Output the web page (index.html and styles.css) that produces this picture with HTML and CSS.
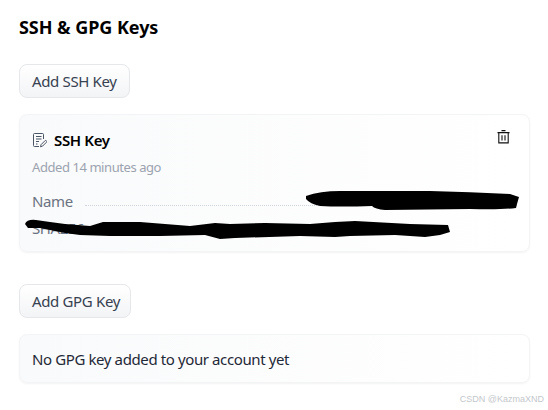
FILE: index.html
```html
<!DOCTYPE html>
<html lang="en">
<head>
<meta charset="utf-8">
<title>SSH &amp; GPG Keys</title>
<link rel="stylesheet" href="styles.css">
</head>
<body>
<main class="page">
  <h1 class="title">SSH &amp; GPG Keys</h1>
  <button class="btn btn-ssh" type="button">Add SSH Key</button>
  <section class="card key-card">
    <div class="key-head">
      <svg class="key-icon" viewBox="0 0 14 15" width="14" height="15" fill="none" stroke="#4b5563" stroke-width="1">
        <path d="M10.5 6V1.5a1 1 0 0 0-1-1h-8a1 1 0 0 0-1 1v11a1 1 0 0 0 1 1H6"/>
        <path d="M3 3.5h5.5M3 6h5.5M3 8.5h3M3 11h1.5"/>
        <path d="M7.5 13.8l.6-2.2 3.8-3.8a1 1 0 0 1 1.5 1.5l-3.8 3.8z"/>
      </svg>
      <h2 class="key-name">SSH Key</h2>
      <svg class="trash" viewBox="0 0 13 14" width="13" height="14" fill="none" stroke="#111" stroke-width="1.1">
        <path d="M4.5.6h4M.5 2.6h12M1.8 2.6v10.3h9.4V2.6M5 5.2v5.2M8 5.2v5.2"/>
      </svg>
    </div>
    <p class="added">Added 14 minutes ago</p>
    <div class="row row-name"><span class="label">Name</span><span class="dots"></span></div>
    <div class="row row-sha"><span class="label">SHA256:</span></div>
    <svg class="scribble" viewBox="0 0 548 410" width="548" height="410" aria-hidden="true">
      <path fill="#000" d="M306 196 Q320 191 340 191 L430 191 Q470 192 510 194 L519 197 L517 204 L516 208 Q500 210 470 209 L385 210 Q375 209 372 206 Q340 207 320 206 Q310 204 306 199Z"/>
      <path fill="#000" d="M25 224 Q27 219 36 220 L50 222 L65 224 L90 226 L103 222 L140 222 L165 224 L190 226 L215 223 L230 224 L265 223 L310 224 L335 222 L355 221 L410 224 L448 225 L450 232 L440 235 L425 237 L410 236 L395 235 L350 236 L335 237 L300 236 L235 238 L220 239 L205 235 L160 236 L110 236 L80 235 L65 233 L40 228 L28 228Z"/>
    </svg>
  </section>
  <button class="btn btn-gpg" type="button">Add GPG Key</button>
  <section class="card empty-card">No GPG key added to your account yet</section>
</main>
<div class="watermark">CSDN @KazmaXND</div>
</body>
</html>
```

FILE: styles.css
```css
* { box-sizing: border-box; }
html, body { margin: 0; height: 100%; background: #fff; }
body {
  width: 548px;
  height: 410px;
  overflow: hidden;
  position: relative;
  font-family: "Noto Sans", "Open Sans", sans-serif;
  color: #1f2937;
}
.page { padding: 15px 18px 0 19px; display: flex; flex-direction: column; align-items: flex-start; }
.title { margin: 0; font-size: 18px; line-height: 24px; font-weight: 700; color: #000; letter-spacing: -0.05px; }
.btn {
  font: inherit;
  font-size: 15px;
  letter-spacing: -0.35px;
  line-height: 20px;
  color: #374151;
  height: 34px;
  padding: 0 12px;
  border: 1px solid #e5e7eb;
  border-radius: 8px;
  background: linear-gradient(to bottom, #fff, #f3f4f6);
  text-align: left;
  white-space: nowrap;
}
.btn-ssh { margin-top: 25px; width: 111px; }
.btn-gpg { margin-top: 32px; width: 112px; }
.card {
  width: 511px;
  margin-top: 16px;
  border: 1px solid #f3f4f6;
  border-radius: 8px;
  background: linear-gradient(to right, #f9fafb, #fff);
  box-shadow: 0 1px 2px rgba(0,0,0,.05);
}
.key-card { height: 138px; padding: 14px 12px 0 12px; }
.key-head { display: flex; align-items: center; height: 21px; }
.key-icon { flex: none; margin: 1px 7px 0 1px; }
.key-name { margin: 0; font-size: 15px; line-height: 20px; font-weight: 600; color: #000; letter-spacing: -0.35px; flex: 1; }
.trash { flex: none; margin: -6px 7px 0 0; }
.added { margin: 7px 0 0; font-size: 13px; line-height: 20px; color: #9ca3af; letter-spacing: -0.43px; }
.row { display: flex; align-items: center; height: 27px; }
.row-name { margin-top: 10px; }
.label { font-size: 15px; line-height: 20px; color: #6b7280; letter-spacing: -0.4px; }
.dots { flex: 1; margin: 9px 0 0 12px; border-top: 1px dotted #d1d5db; }
.scribble { position: absolute; left: 0; top: 0; pointer-events: none; }
.empty-card {
  height: 49px;
  padding: 0 12px;
  display: flex;
  align-items: center;
  font-size: 15px;
  letter-spacing: -0.39px;
  color: #1f2937;
}
.watermark {
  position: absolute;
  right: 4px;
  bottom: 5px;
  font-family: "Liberation Sans", sans-serif;
  font-size: 9px;
  line-height: 11px;
  color: #c4c7cc;
}
```
